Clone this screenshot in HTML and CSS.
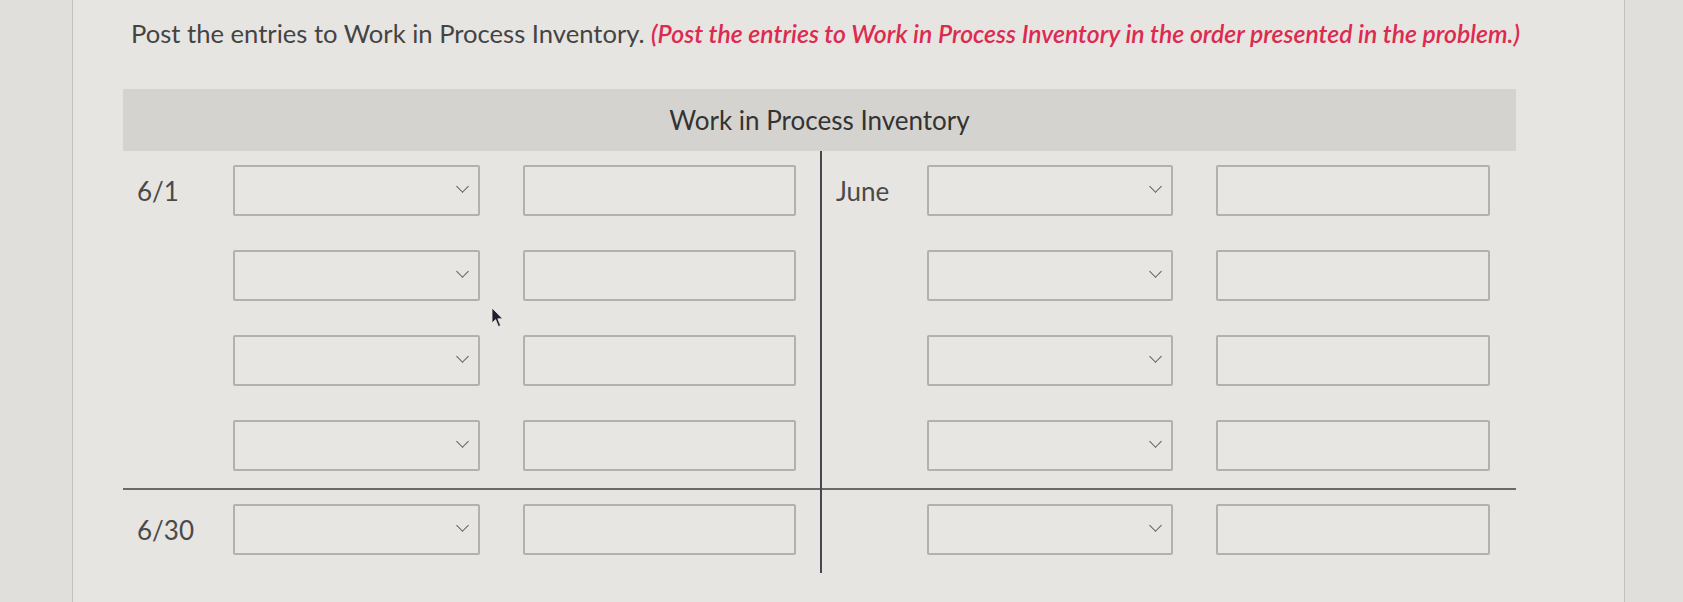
FILE: index.html
```html
<!DOCTYPE html>
<html lang="en">
<head>
    <meta charset="UTF-8">
    <meta name="viewport" content="width=device-width, initial-scale=1.0">
    <title>Work in Process Inventory</title>
    <link rel="stylesheet" href="styles.css">
</head>
<body>
    <div class="panel">
        <p class="prompt">Post the entries to Work in Process Inventory. <em class="note">(Post the entries to Work in Process Inventory in the order presented in the problem.)</em></p>

        <div class="t-account">
            <div class="t-title">Work in Process Inventory</div>

            <div class="t-body">
                <!-- debit side -->
                <div class="t-side">
                    <div class="entries">
                        <div class="entry">
                            <span class="label">6/1</span>
                            <div class="select"></div>
                            <input class="amount" type="text">
                        </div>
                        <div class="entry">
                            <span class="label"></span>
                            <div class="select"></div>
                            <input class="amount" type="text">
                        </div>
                        <div class="entry">
                            <span class="label"></span>
                            <div class="select"></div>
                            <input class="amount" type="text">
                        </div>
                        <div class="entry">
                            <span class="label"></span>
                            <div class="select"></div>
                            <input class="amount" type="text">
                        </div>
                    </div>
                    <div class="entries total">
                        <div class="entry">
                            <span class="label">6/30</span>
                            <div class="select"></div>
                            <input class="amount" type="text">
                        </div>
                    </div>
                </div>

                <!-- credit side -->
                <div class="t-side credit">
                    <div class="entries">
                        <div class="entry">
                            <span class="label">June</span>
                            <div class="select"></div>
                            <input class="amount" type="text">
                        </div>
                        <div class="entry">
                            <span class="label"></span>
                            <div class="select"></div>
                            <input class="amount" type="text">
                        </div>
                        <div class="entry">
                            <span class="label"></span>
                            <div class="select"></div>
                            <input class="amount" type="text">
                        </div>
                        <div class="entry">
                            <span class="label"></span>
                            <div class="select"></div>
                            <input class="amount" type="text">
                        </div>
                    </div>
                    <div class="entries total">
                        <div class="entry">
                            <span class="label"></span>
                            <div class="select"></div>
                            <input class="amount" type="text">
                        </div>
                    </div>
                </div>
            </div>
        </div>

        <!-- mouse pointer -->
        <svg class="pointer" width="14" height="22" viewBox="0 0 14 22">
            <path d="M1 1 L1 16 L4.6 12.6 L7.4 19.5 L9.6 18.6 L6.8 11.8 L11.6 11.8 Z" fill="#1d1f2e" stroke="#e8e6e2" stroke-width="0.8"/>
        </svg>
    </div>
</body>
</html>
```

FILE: styles.css
```css
body {
    margin: 0;
    padding: 0;
    background-color: #e1dfdb;
    font-family: Lato, "Open Sans", sans-serif;
    color: #3b3b3b;
}

.panel {
    position: relative;
    margin: 0 58px 0 72px;
    height: 602px;
    padding: 0 48px;
    box-sizing: border-box;
    background-color: #e7e5e1;
    border-left: 1px solid #c4c2bd;
    border-right: 1px solid #c4c2bd;
}

.prompt {
    margin: 0;
    padding: 18px 0 0 10px;
    font-size: 25.6px;
    line-height: 30px;
    color: #444;
    white-space: nowrap;
}

.note {
    font-weight: 600;
    font-size: 24.8px;
    color: #dc2a50;
}

.t-account {
    width: 1393px;
    margin: 40px 0 0 2px;
}

.t-title {
    height: 62px;
    line-height: 62px;
    text-align: center;
    background-color: #d5d3cf;
    font-size: 26px;
    color: #333;
}

.t-body {
    display: flex;
}

.t-side {
    width: 697px;
    padding-bottom: 18px;
}

.t-side.credit {
    flex: 1;
    border-left: 2px solid #4a4550;
}

.entries {
    display: flex;
    flex-direction: column;
    gap: 34px;
    padding: 14px 0 17px 14px;
}

.entries.total {
    border-top: 2px solid #6c6a68;
    padding-bottom: 0;
}

.entry {
    display: grid;
    grid-template-columns: 53px 247px 273px;
    column-gap: 43px;
    align-items: center;
    height: 51px;
}

.t-side.credit .entry {
    grid-template-columns: 48px 246px 274px;
}

.label {
    font-size: 26px;
    color: #4a4a4a;
}

.select,
.amount {
    height: 51px;
    box-sizing: border-box;
    border: 2px solid #b3b1ad;
    border-radius: 2px;
    background-color: #e8e6e2;
}

.amount {
    width: 100%;
    margin: 0;
    padding: 0 8px;
    font-family: inherit;
    font-size: 18px;
}

.select {
    position: relative;
}

/* little chevron on the right of each dropdown */
.select::after {
    content: "";
    position: absolute;
    right: 11px;
    top: 15px;
    width: 8px;
    height: 8px;
    border-right: 1.8px solid #5e5c5a;
    border-bottom: 1.8px solid #5e5c5a;
    transform: rotate(45deg);
}

.pointer {
    position: absolute;
    left: 418px;
    top: 307px;
    filter: blur(0.6px);
}
```
